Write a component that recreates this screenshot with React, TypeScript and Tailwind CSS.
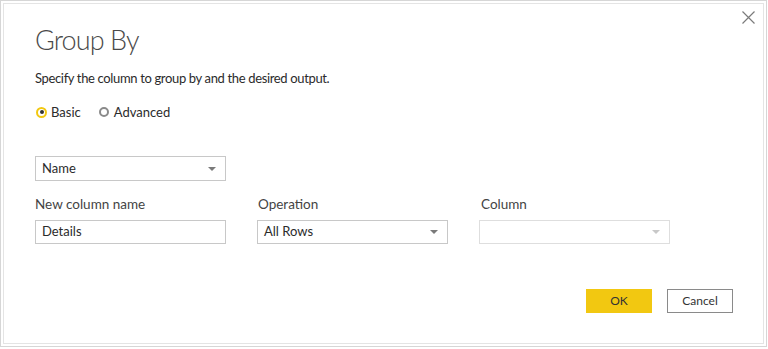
import React from "react";

const Caret = ({ color = "#7a7a7a" }: { color?: string }) => (
  <svg width="8" height="4" viewBox="0 0 8 4" className="shrink-0">
    <path d="M0 0 L8 0 L4 4 Z" fill={color} />
  </svg>
);

export default function App() {
  return (
    <div
      className="w-[768px] h-[349px] bg-white text-[#252423]"
      style={{ fontFamily: 'Lato, "Open Sans", sans-serif' }}
    >
      <div className="w-[767px] h-[347px] border border-[#d6d6d6] p-[2px]">
        <div className="relative w-full h-full border border-[#e4e4e4] pl-[31px] pt-[19px]">
          <button className="absolute right-[7px] top-[5px] w-[16px] h-[16px] flex items-center justify-center">
            <svg width="13" height="13" viewBox="0 0 13 13">
              <path d="M0.5 0.5 L12.5 12.5 M12.5 0.5 L0.5 12.5" stroke="#7b7b7b" strokeWidth="1.2" />
            </svg>
          </button>

          <h1 className="text-[27px] font-light leading-[34px] tracking-[-0.9px] text-[#4a4a4a]">Group By</h1>

          <p className="mt-[11px] text-[13px] leading-[20px] tracking-[-0.35px] text-[#2b2b2b]">
            Specify the column to group by and the desired output.
          </p>

          <div className="mt-[14px] flex items-center text-[13px] leading-[20px] text-[#2b2b2b]">
            <div className="flex items-center ml-[1px]">
              <span className="w-[11px] h-[11px] rounded-full border-[2px] border-[#f2c811] flex items-center justify-center">
                <span className="w-[4px] h-[4px] rounded-full bg-[#333]" />
              </span>
              <span className="ml-[4px]">Basic</span>
            </div>
            <div className="flex items-center ml-[18px]">
              <span className="w-[10px] h-[10px] rounded-full border-[2px] border-[#8a8a8a]" />
              <span className="ml-[5px]">Advanced</span>
            </div>
          </div>

          <div className="mt-[34px] w-[191px] h-[25px] border border-[#c8c8c8] flex items-center justify-between pl-[6px] pr-[9px] text-[13px] text-[#2b2b2b]">
            <span>Name</span>
            <Caret />
          </div>

          <div className="mt-[13px] flex gap-[31px]">
            <div className="w-[191px]">
              <div className="text-[13.5px] leading-[20px] text-[#444]">New column name</div>
              <div className="mt-[6px] h-[24px] border border-[#c8c8c8] flex items-center pl-[6px] text-[13px] text-[#2b2b2b]">
                Details
              </div>
            </div>
            <div className="w-[191px]">
              <div className="text-[13.5px] leading-[20px] text-[#444] pl-[1px]">Operation</div>
              <div className="mt-[6px] h-[24px] border border-[#c8c8c8] flex items-center justify-between pl-[6px] pr-[9px] text-[13px] text-[#2b2b2b]">
                <span>All Rows</span>
                <Caret />
              </div>
            </div>
            <div className="w-[191px]">
              <div className="text-[13.5px] leading-[20px] text-[#444] pl-[2px]">Column</div>
              <div className="mt-[6px] h-[24px] border border-[#dedede] flex items-center justify-end pr-[9px]">
                <Caret color="#c8c8c8" />
              </div>
            </div>
          </div>

          <div className="absolute right-[30px] bottom-[30px] flex gap-[15px]">
            <button className="w-[66px] h-[24px] bg-[#f2c811] text-[12px] text-[#333] flex items-center justify-center">
              OK
            </button>
            <button className="w-[66px] h-[24px] border border-[#8a8a8a] bg-white text-[12px] text-[#333] flex items-center justify-center">
              Cancel
            </button>
          </div>
        </div>
      </div>
    </div>
  );
}
